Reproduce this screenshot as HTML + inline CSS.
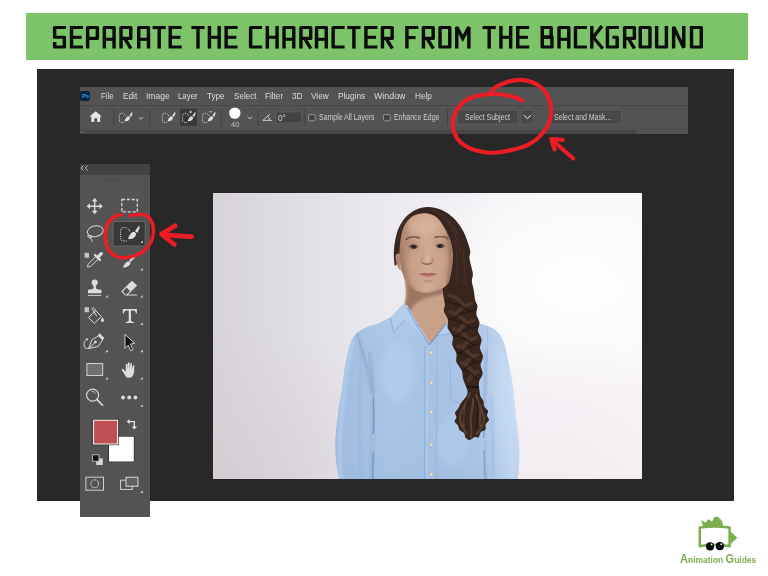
<!DOCTYPE html>
<html><head><meta charset="utf-8">
<style>
html,body{margin:0;padding:0;background:#fff;}
body{width:768px;height:576px;position:relative;overflow:hidden;font-family:"Liberation Sans",sans-serif;}
.abs{position:absolute;}
#banner{left:26px;top:13.2px;width:722px;height:47.2px;background:#7dc36a;}
.title{position:absolute;left:0;top:0;}
#dark{left:37px;top:69.4px;width:697px;height:431.2px;background:#282828;}
#menubar{left:80px;top:87px;width:608px;height:18px;background:#535353;}
#optbar{left:80px;top:105px;width:608px;height:24.5px;background:#535353;border-top:1px solid #474747;box-sizing:border-box;}
#strip{left:80px;top:129.5px;width:608px;height:4.5px;background:#535353;}
#strip i{position:absolute;left:0;top:0;height:100%;width:556px;background:#474747;display:block;}
.mt{position:absolute;top:90.8px;font-size:8.6px;line-height:10px;color:#dcdcdc;white-space:nowrap;transform-origin:0 50%;}
.ot{position:absolute;top:113.1px;font-size:8.2px;line-height:10px;color:#cdcdcd;white-space:nowrap;transform-origin:0 50%;}
.btn{position:absolute;top:109.5px;height:15px;background:#494949;border:1px solid #636363;border-radius:2px;box-sizing:border-box;}
#tools{left:80px;top:164px;width:70.3px;height:353px;background:#535353;}
#tools .hd{position:absolute;left:0;top:0;width:100%;height:11px;background:#424242;}
#photo{left:213px;top:193px;width:429px;height:286px;overflow:hidden;background:#e6e3e7;}
svg{display:block}
#ov{left:0;top:0;}
</style></head><body>
<div id="banner" class="abs"></div>
<svg class="title" width="768" height="70" viewBox="0 0 768 70"><g fill="none" stroke="#0c0c0c" stroke-width="3.45"><g transform="translate(52.9,26) scale(1,0.9)"><path d="M13.2,1.73 L1.73,1.73 L1.73,12.56 L11.47,12.56 L11.47,23.39 L1.73,23.39 L1.73,17.89" stroke-linejoin="round" stroke-linecap="butt"/></g><g transform="translate(69.8,26) scale(1,0.9)"><path d="M13.2,1.73 L1.73,1.73 L1.73,23.39 L13.2,23.39" stroke-linejoin="miter" stroke-linecap="butt"/><path d="M1.73,12.56 L11.9,12.56" stroke-linejoin="round" stroke-linecap="butt"/></g><g transform="translate(85.9,26) scale(1,0.9)"><path d="M1.73,25.11 L1.73,1.73 L11.47,1.73 L11.47,13.76 L1.73,13.76" stroke-linejoin="round" stroke-linecap="butt"/></g><g transform="translate(102.6,26) scale(1,0.9)"><path d="M1.73,25.11 L1.73,1.73 L11.47,1.73 L11.47,25.11" stroke-linejoin="round" stroke-linecap="butt"/><path d="M1.73,14.76 L11.47,14.76" stroke-linejoin="round" stroke-linecap="butt"/></g><g transform="translate(119.3,26) scale(1,0.9)"><path d="M1.73,25.11 L1.73,1.73 L11.47,1.73 L11.47,13.76 L1.73,13.76" stroke-linejoin="round" stroke-linecap="butt"/><path d="M5.4,13.76 L11.6,25.11" stroke-linejoin="round" stroke-linecap="butt"/></g><g transform="translate(137,26) scale(1,0.9)"><path d="M1.73,25.11 L1.73,1.73 L11.47,1.73 L11.47,25.11" stroke-linejoin="round" stroke-linecap="butt"/><path d="M1.73,14.76 L11.47,14.76" stroke-linejoin="round" stroke-linecap="butt"/></g><g transform="translate(152.6,26) scale(1,0.9)"><path d="M0,1.73 L13.2,1.73" stroke-linejoin="round" stroke-linecap="butt"/><path d="M6.6,1.73 L6.6,25.11" stroke-linejoin="round" stroke-linecap="butt"/></g><g transform="translate(168.5,26) scale(1,0.9)"><path d="M13.2,1.73 L1.73,1.73 L1.73,23.39 L13.2,23.39" stroke-linejoin="miter" stroke-linecap="butt"/><path d="M1.73,12.56 L11.9,12.56" stroke-linejoin="round" stroke-linecap="butt"/></g><g transform="translate(191.4,26) scale(1,0.9)"><path d="M0,1.73 L13.2,1.73" stroke-linejoin="round" stroke-linecap="butt"/><path d="M6.6,1.73 L6.6,25.11" stroke-linejoin="round" stroke-linecap="butt"/></g><g transform="translate(207.7,26) scale(1,0.9)"><path d="M1.73,0 L1.73,25.11" stroke-linejoin="round" stroke-linecap="butt"/><path d="M11.47,0 L11.47,25.11" stroke-linejoin="round" stroke-linecap="butt"/><path d="M1.73,12.56 L11.47,12.56" stroke-linejoin="round" stroke-linecap="butt"/></g><g transform="translate(224.4,26) scale(1,0.9)"><path d="M13.2,1.73 L1.73,1.73 L1.73,23.39 L13.2,23.39" stroke-linejoin="miter" stroke-linecap="butt"/><path d="M1.73,12.56 L11.9,12.56" stroke-linejoin="round" stroke-linecap="butt"/></g><g transform="translate(248.9,26) scale(1,0.9)"><path d="M13.2,1.73 L1.73,1.73 L1.73,23.39 L13.2,23.39" stroke-linejoin="round" stroke-linecap="butt"/></g><g transform="translate(265.6,26) scale(1,0.9)"><path d="M1.73,0 L1.73,25.11" stroke-linejoin="round" stroke-linecap="butt"/><path d="M11.47,0 L11.47,25.11" stroke-linejoin="round" stroke-linecap="butt"/><path d="M1.73,12.56 L11.47,12.56" stroke-linejoin="round" stroke-linecap="butt"/></g><g transform="translate(282.3,26) scale(1,0.9)"><path d="M1.73,25.11 L1.73,1.73 L11.47,1.73 L11.47,25.11" stroke-linejoin="round" stroke-linecap="butt"/><path d="M1.73,14.76 L11.47,14.76" stroke-linejoin="round" stroke-linecap="butt"/></g><g transform="translate(299.2,26) scale(1,0.9)"><path d="M1.73,25.11 L1.73,1.73 L11.47,1.73 L11.47,13.76 L1.73,13.76" stroke-linejoin="round" stroke-linecap="butt"/><path d="M5.4,13.76 L11.6,25.11" stroke-linejoin="round" stroke-linecap="butt"/></g><g transform="translate(314.8,26) scale(1,0.9)"><path d="M1.73,25.11 L1.73,1.73 L11.47,1.73 L11.47,25.11" stroke-linejoin="round" stroke-linecap="butt"/><path d="M1.73,14.76 L11.47,14.76" stroke-linejoin="round" stroke-linecap="butt"/></g><g transform="translate(331.4,26) scale(1,0.9)"><path d="M13.2,1.73 L1.73,1.73 L1.73,23.39 L13.2,23.39" stroke-linejoin="round" stroke-linecap="butt"/></g><g transform="translate(347.3,26) scale(1,0.9)"><path d="M0,1.73 L13.2,1.73" stroke-linejoin="round" stroke-linecap="butt"/><path d="M6.6,1.73 L6.6,25.11" stroke-linejoin="round" stroke-linecap="butt"/></g><g transform="translate(364.2,26) scale(1,0.9)"><path d="M13.2,1.73 L1.73,1.73 L1.73,23.39 L13.2,23.39" stroke-linejoin="miter" stroke-linecap="butt"/><path d="M1.73,12.56 L11.9,12.56" stroke-linejoin="round" stroke-linecap="butt"/></g><g transform="translate(380.7,26) scale(1,0.9)"><path d="M1.73,25.11 L1.73,1.73 L11.47,1.73 L11.47,13.76 L1.73,13.76" stroke-linejoin="round" stroke-linecap="butt"/><path d="M5.4,13.76 L11.6,25.11" stroke-linejoin="round" stroke-linecap="butt"/></g><g transform="translate(405.2,26) scale(1,0.9)"><path d="M13.2,1.73 L1.73,1.73 L1.73,25.11" stroke-linejoin="miter" stroke-linecap="butt"/><path d="M1.73,12.86 L10.4,12.86" stroke-linejoin="round" stroke-linecap="butt"/></g><g transform="translate(421.7,26) scale(1,0.9)"><path d="M1.73,25.11 L1.73,1.73 L11.47,1.73 L11.47,13.76 L1.73,13.76" stroke-linejoin="round" stroke-linecap="butt"/><path d="M5.4,13.76 L11.6,25.11" stroke-linejoin="round" stroke-linecap="butt"/></g><g transform="translate(438.3,26) scale(1,0.9)"><path d="M1.73,1.73 L11.47,1.73 L11.47,23.39 L1.73,23.39 Z" stroke-linejoin="round" stroke-linecap="butt"/></g><g transform="translate(455,26) scale(1,0.9)"><path d="M1.73,25.11 L1.73,1.12 L7.8,13.89 L13.88,1.12 L13.88,25.11" stroke-linejoin="miter" stroke-linecap="butt"/></g><g transform="translate(482.6,26) scale(1,0.9)"><path d="M0,1.73 L13.2,1.73" stroke-linejoin="round" stroke-linecap="butt"/><path d="M6.6,1.73 L6.6,25.11" stroke-linejoin="round" stroke-linecap="butt"/></g><g transform="translate(499.2,26) scale(1,0.9)"><path d="M1.73,0 L1.73,25.11" stroke-linejoin="round" stroke-linecap="butt"/><path d="M11.47,0 L11.47,25.11" stroke-linejoin="round" stroke-linecap="butt"/><path d="M1.73,12.56 L11.47,12.56" stroke-linejoin="round" stroke-linecap="butt"/></g><g transform="translate(516,26) scale(1,0.9)"><path d="M13.2,1.73 L1.73,1.73 L1.73,23.39 L13.2,23.39" stroke-linejoin="miter" stroke-linecap="butt"/><path d="M1.73,12.56 L11.9,12.56" stroke-linejoin="round" stroke-linecap="butt"/></g><g transform="translate(540.5,26) scale(1,0.9)"><path d="M1.73,1.73 L10.67,1.73 L10.67,12.36 L1.73,12.36" stroke-linejoin="round" stroke-linecap="butt"/><path d="M1.73,12.36 L11.47,12.36 L11.47,23.39 L1.73,23.39 L1.73,0.03" stroke-linejoin="round" stroke-linecap="butt"/></g><g transform="translate(557.3,26) scale(1,0.9)"><path d="M1.73,25.11 L1.73,1.73 L11.47,1.73 L11.47,25.11" stroke-linejoin="round" stroke-linecap="butt"/><path d="M1.73,14.76 L11.47,14.76" stroke-linejoin="round" stroke-linecap="butt"/></g><g transform="translate(573.75,26) scale(1,0.9)"><path d="M13.2,1.73 L1.73,1.73 L1.73,23.39 L13.2,23.39" stroke-linejoin="round" stroke-linecap="butt"/></g><g transform="translate(590.1,26) scale(1,0.9)"><path d="M1.73,0 L1.73,25.11" stroke-linejoin="round" stroke-linecap="butt"/><path d="M11.8,0 L3.23,12.56 L12.6,25.11" stroke-linejoin="miter" stroke-linecap="butt"/></g><g transform="translate(605.7,26) scale(1,0.9)"><path d="M13.2,1.73 L1.73,1.73 L1.73,23.39 L11.47,23.39 L11.47,12.56 L6.6,12.56" stroke-linejoin="round" stroke-linecap="butt"/></g><g transform="translate(622.9,26) scale(1,0.9)"><path d="M1.73,25.11 L1.73,1.73 L11.47,1.73 L11.47,13.76 L1.73,13.76" stroke-linejoin="round" stroke-linecap="butt"/><path d="M5.4,13.76 L11.6,25.11" stroke-linejoin="round" stroke-linecap="butt"/></g><g transform="translate(638.5,26) scale(1,0.9)"><path d="M1.73,1.73 L11.47,1.73 L11.47,23.39 L1.73,23.39 Z" stroke-linejoin="round" stroke-linecap="butt"/></g><g transform="translate(654.9,26) scale(1,0.9)"><path d="M1.73,0 L1.73,23.39 L11.47,23.39 L11.47,0" stroke-linejoin="round" stroke-linecap="butt"/></g><g transform="translate(671.9,26) scale(1,0.9)"><path d="M1.73,25.11 L1.73,0.93 L11.88,24.19 L11.88,0" stroke-linejoin="miter" stroke-linecap="butt"/></g><g transform="translate(689.8,26) scale(1,0.9)"><path d="M1.73,1.73 L11.47,1.73 L11.47,23.39 L1.73,23.39 L1.73,0.03" stroke-linejoin="round" stroke-linecap="butt"/></g></g></svg>
<div id="dark" class="abs"></div>
<div id="menubar" class="abs"></div>
<div id="optbar" class="abs"></div>
<div id="strip" class="abs"><i></i></div>
<div class="abs" style="left:80.3px;top:91px;width:9.4px;height:9.5px;background:#0a2440;border-radius:2px;"></div>
<span class="abs" style="left:81.5px;top:92.8px;font-size:6px;line-height:7px;font-weight:bold;color:#35a6f5;letter-spacing:-0.2px;transform:scaleX(0.99);transform-origin:0 50%;">Ps</span>
<svg class="abs" style="left:0;top:0" width="768" height="140" viewBox="0 0 768 140">
<defs>
<g id="qs">
<path d="M6.6,3.9 C5.6,1.7 4.2,1.3 2.6,1.3 C0.9,1.3 0.3,2.7 0.3,4.4 L0.3,8 C0.3,9.8 1.2,10.6 3,10.6 L4.8,10.6" fill="none" stroke="#cfcfcf" stroke-width="1" stroke-dasharray="1,0.8"/>
<path d="M13,-0.1 L13.4,1.5 L12,5.1 L10.2,3.7 Z" fill="#e0dee0"/>
<path d="M9.9,4.3 C8,4 6.4,6.2 5.4,9.1 C8.2,9.8 10.5,8.5 11.1,5.6 Z" fill="#e0dee0"/>
</g>
</defs>
<!-- home -->
<path d="M95.7,111.2 L101.9,116.6 L100.1,116.6 L100.1,122 L97.2,122 L97.2,118.3 L94.3,118.3 L94.3,122 L91.3,122 L91.3,116.6 L89.5,116.6 Z" fill="#e6e6e6"/>
<!-- dividers -->
<g stroke="#444" stroke-width="1">
<path d="M113.9,109 V125.2 M149.7,109 V125.2 M221.4,109 V125.4 M258.2,109 V125.4 M304.4,109 V125.4 M447.5,109 V125.4"/>
</g>
<use href="#qs" x="119.1" y="111.9"/>
<rect x="180.4" y="108.7" width="16.5" height="17" fill="#383838"/>
<use href="#qs" x="162.1" y="111.9"/>
<use href="#qs" x="182.2" y="111.9"/>
<use href="#qs" x="202.2" y="111.9"/>
<path d="M190.6,110.6 V113.4 M189.2,112 H192" stroke="#ddd" stroke-width="0.8" fill="none"/>
<path d="M209.2,111.8 H212" stroke="#ddd" stroke-width="0.8" fill="none"/>
<!-- chevrons -->
<path d="M138.6,117.2 L140.8,119.2 L143,117.2" stroke="#d0d0d0" stroke-width="0.9" fill="none"/>
<path d="M247.5,116.8 L249.8,118.8 L252.1,116.8" stroke="#d0d0d0" stroke-width="0.9" fill="none"/>
<!-- brush preview -->
<circle cx="234.8" cy="113.1" r="5.7" fill="#fff"/>
<!-- angle icon -->
<path d="M270,114 L262.8,120.4 H272 M267.6,116.2 Q269.6,117.8 269.6,120.4" stroke="#d4d4d4" stroke-width="0.9" fill="none"/>
<!-- angle input -->
<rect x="276.2" y="112" width="25" height="10.8" rx="1" fill="#434343" stroke="#606060" stroke-width="0.7"/>
<!-- checkboxes -->
<rect x="308.5" y="114.6" width="6.8" height="6.2" rx="1.3" fill="#463f44" stroke="#a5a5a5" stroke-width="0.8"/>
<rect x="383.5" y="114.6" width="6.8" height="6.2" rx="1.3" fill="#463f44" stroke="#a5a5a5" stroke-width="0.8"/>
<!-- buttons -->
<rect x="457" y="109.8" width="61" height="14.4" rx="1.5" fill="#484848" stroke="#626262" stroke-width="0.8"/>
<rect x="521.2" y="109.8" width="12.2" height="14.4" rx="1.5" fill="#484848" stroke="#626262" stroke-width="0.8"/>
<rect x="550.3" y="109.8" width="71" height="14.4" rx="1.5" fill="#484848" stroke="#626262" stroke-width="0.8"/>
<path d="M523.8,115.2 L527.3,118.6 L530.8,115.2" stroke="#eee" stroke-width="1" fill="none"/>
<!-- grip on strip -->
<path d="M80.6,133 L82,131 M82.6,133 L84,131" stroke="#888" stroke-width="0.7"/>
</svg>
<span class="abs" style="left:230.5px;top:119.6px;font-size:7.9px;line-height:9px;color:#c4c4c4;transform:scaleX(0.96);transform-origin:0 50%;">40</span>
<span class="abs" style="left:278.2px;top:112.9px;font-size:8.4px;line-height:10px;color:#d0d0d0;transform:scaleX(0.99);transform-origin:0 50%;">0°</span>
<span class="mt" style="left:101.0px;transform:scaleX(0.903)">File</span>
<span class="mt" style="left:122.7px;transform:scaleX(0.959)">Edit</span>
<span class="mt" style="left:145.6px;transform:scaleX(0.988)">Image</span>
<span class="mt" style="left:178.1px;transform:scaleX(0.912)">Layer</span>
<span class="mt" style="left:206.9px;transform:scaleX(0.945)">Type</span>
<span class="mt" style="left:233.5px;transform:scaleX(0.942)">Select</span>
<span class="mt" style="left:264.8px;transform:scaleX(0.948)">Filter</span>
<span class="mt" style="left:291.9px;transform:scaleX(0.947)">3D</span>
<span class="mt" style="left:311.2px;transform:scaleX(0.961)">View</span>
<span class="mt" style="left:338.0px;transform:scaleX(0.965)">Plugins</span>
<span class="mt" style="left:373.6px;transform:scaleX(1.028)">Window</span>
<span class="mt" style="left:414.6px;transform:scaleX(0.953)">Help</span>
<span class="ot" style="left:319.1px;transform:scaleX(0.848)">Sample All Layers</span>
<span class="ot" style="left:393.9px;transform:scaleX(0.844)">Enhance Edge</span>
<span class="ot" style="left:464.9px;transform:scaleX(0.859)">Select Subject</span>
<span class="ot" style="left:554.2px;transform:scaleX(0.850)">Select and Mask...</span>

<div id="tools" class="abs"><div class="hd"></div></div>
<div id="photo" class="abs">
<svg width="429" height="286" viewBox="213 193 429 286" style="position:absolute;left:0;top:0">
<defs>
<linearGradient id="bgh" x1="0" y1="0" x2="1" y2="0">
<stop offset="0" stop-color="#d7d3d8"/><stop offset="0.1" stop-color="#dcd9de"/><stop offset="0.28" stop-color="#e6e3e8"/><stop offset="0.48" stop-color="#eeecf0"/><stop offset="0.68" stop-color="#f5f3f7"/><stop offset="1" stop-color="#f8f6f9"/>
</linearGradient>
<radialGradient id="glow" cx="0.84" cy="0.32" r="0.42">
<stop offset="0" stop-color="#fff" stop-opacity="0.95"/><stop offset="0.5" stop-color="#fff" stop-opacity="0.55"/><stop offset="1" stop-color="#fff" stop-opacity="0"/>
</radialGradient>
<radialGradient id="dk" cx="0.0" cy="1.0" r="0.55">
<stop offset="0" stop-color="#d3cdd2" stop-opacity="0.8"/><stop offset="1" stop-color="#d3cdd2" stop-opacity="0"/>
</radialGradient>
<radialGradient id="pinkb" cx="0.8" cy="1.05" r="0.55">
<stop offset="0" stop-color="#f2e8ee" stop-opacity="0.75"/><stop offset="1" stop-color="#f2e8ee" stop-opacity="0"/>
</radialGradient>
<linearGradient id="skin" x1="0" y1="0" x2="1" y2="0">
<stop offset="0" stop-color="#a67d67"/><stop offset="0.22" stop-color="#c59b84"/><stop offset="0.5" stop-color="#d2ab94"/><stop offset="0.8" stop-color="#c9a089"/><stop offset="1" stop-color="#ae856f"/>
</linearGradient>
<linearGradient id="shirt" x1="0" y1="0" x2="1" y2="0">
<stop offset="0" stop-color="#9fbbde"/><stop offset="0.3" stop-color="#aac5e6"/><stop offset="0.6" stop-color="#a6c1e3"/><stop offset="0.8" stop-color="#b0c9e8"/><stop offset="0.91" stop-color="#c5d9f1"/><stop offset="1" stop-color="#d2e1f5"/>
</linearGradient>
<linearGradient id="shirtv" x1="0" y1="0" x2="0" y2="1">
<stop offset="0" stop-color="#b6d0ee" stop-opacity="0.5"/><stop offset="0.5" stop-color="#a8c4e6" stop-opacity="0"/><stop offset="1" stop-color="#98b6dd" stop-opacity="0.35"/>
</linearGradient>
<filter id="b1" x="-5%" y="-5%" width="110%" height="110%"><feGaussianBlur stdDeviation="0.55"/></filter>
<filter id="b2" x="-20%" y="-20%" width="140%" height="140%"><feGaussianBlur stdDeviation="1.4"/></filter>
<filter id="b3" x="-30%" y="-30%" width="160%" height="160%"><feGaussianBlur stdDeviation="3"/></filter>
<clipPath id="braidclip"><path d="M447,285 C446.4,286.5 443.6,291.1 443.4,294 C443.1,296.9 445.5,299.7 445.6,302.5 C445.6,305.3 443.4,308.2 443.8,311 C444.2,313.8 447.4,316.7 448,319.5 C448.7,322.3 446.9,325.2 447.7,328 C448.5,330.8 452,333.7 452.8,336.5 C453.5,339.3 451.7,342.2 452.3,345 C452.9,347.8 455.8,350.7 456.5,353.5 C457.2,356.3 455.5,359.2 456.4,362 C457.3,364.8 460.6,367.7 461.8,370.5 C462.9,373.3 462.2,375.6 463.1,379 C464.1,382.4 467,388 467.4,391 C467.8,394 466.9,395 465.8,397 C464.7,399 462.2,401.2 461,403 C459.8,404.8 459.5,406.3 458.5,408 C457.5,409.7 455.3,411.5 455,413 C454.7,414.5 456.6,415.6 456.5,417 C456.4,418.4 454.4,420.1 454.6,421.5 C454.9,422.9 457.2,424.1 458,425.5 C458.8,426.9 458.5,428.8 459.5,430 C460.5,431.2 463,431.7 464,433 C465,434.3 464.6,436.4 465.5,437.6 C466.4,438.8 468.1,440.1 469.6,440 C471.1,439.9 473,437.5 474.5,437 C476,436.5 477.5,438 478.6,437.2 C479.7,436.4 479.8,433.3 481,432 C482.2,430.7 484.8,430.8 485.6,429.5 C486.4,428.2 485,426.1 485.6,424.5 C486.2,422.9 488.8,421.5 489,420 C489.2,418.5 487.2,417 487,415.5 C486.8,414 488.5,412.5 488,411 C487.5,409.5 485,408.2 484.2,406.5 C483.4,404.8 484,402.7 483.4,401 C482.8,399.3 481.2,398.1 480.6,396.5 C480,394.9 479.9,393.9 479.6,391.5 C479.3,389.1 478.5,385 479,382 C479.5,379 482.5,376.3 482.7,373.5 C482.9,370.7 480.5,367.8 480.5,365 C480.6,362.2 483.1,359.3 483,356.5 C482.9,353.7 480.2,350.8 479.9,348 C479.7,345.2 481.9,342.3 481.6,339.5 C481.3,336.7 478.3,333.8 477.9,331 C477.6,328.2 479.8,325.3 479.5,322.5 C479.2,319.7 476.6,316.8 476.3,314 C475.9,311.2 477.9,308.3 477.4,305.5 C476.8,302.7 473.8,300.4 472.8,297 C471.8,293.6 471.7,287 471.5,285 Z"/></clipPath>
<clipPath id="faceclip"><path id="facep" d="M399.8,257.5 C399.2,252 399.6,246 400.4,240.8 C401,235.5 402,230.6 404,226.25 C406.2,221.8 409.3,218.2 413.3,215.8 C417.2,213.8 421.4,213 425.8,213.3 C429.7,213.7 433.3,214.9 436.25,216.9 C439.3,219.4 441.7,222.6 443.5,226.25 C446,230 448,234.2 449.8,238.75 C451.5,243.5 452.6,248.4 452.9,253.3 C453.1,258.2 452.8,263.1 451.9,267.9 C451.2,272.8 450.2,277.7 448.75,282.5 C446,286.5 442,289.5 436.25,290.8 C432.6,292.3 428.8,293 424.8,292.9 C421.1,292.6 417.6,291.5 414.4,289.8 C411.7,287.8 409.2,285.3 407.1,282.5 C405,279.3 403.3,275.8 401.9,272.1 C400.8,267.5 400.1,262.5 399.8,257.5 Z"/></clipPath>
<clipPath id="torsoclip"><path id="torsop" d="M403,304.5 L391,317.5 C386,319.5 381,322 377.2,323.9 C373,325 369,326.2 364.7,328 C361.5,329.5 358.6,331.4 356.4,333.6 C353.8,336 352,339 350.8,342 C349.6,345 348.7,348.3 348,351.7 C347,356 346,361 345.3,365.6 C344.4,370 343.7,375 343.2,379.4 C342.6,383 342.2,386.5 341.8,390 C341,396 340,400 339.2,404 C338,416 336,428 335.4,439 C335,448 335.5,455 336.2,462 C337,468 338,474 339.2,480 L517.9,480 C518.8,470 519.6,460 519.4,450 C519,439 517.6,428 516,417.5 C515.2,408 514.4,399 513.5,390 C513,385.5 512.2,381 511.4,376.7 C510.5,372 509.5,367.4 508.6,362.8 C507.8,358 506.9,353.5 505.8,348.9 C504.8,345 503.5,341.2 501.7,337.8 C500,334.5 497.6,331.6 494.7,329.4 C490,326.5 484.5,324.5 478,323.2 C470,321.2 460,320.8 452,322 L429,344.5 L407,305 Z"/></clipPath>
</defs>
<rect x="213" y="193" width="429" height="286" fill="url(#bgh)"/>
<rect x="213" y="193" width="429" height="286" fill="url(#glow)"/>
<rect x="213" y="193" width="429" height="286" fill="url(#dk)"/>
<rect x="213" y="193" width="429" height="286" fill="url(#pinkb)"/>
<g filter="url(#b1)">
<!-- neck -->
<path d="M403.5,276 C406.5,288 406.6,298 404,305.5 L429,345.5 L453,322 C448,312 446.5,300 447,288 Z" fill="#c9a189"/>
<path d="M406.5,282 C407.5,292 407,299 405,305.5 L410,312 C414,300 428,297 447,293 L448,284 Z" fill="#94705d" opacity="0.85" filter="url(#b2)"/>
<!-- shirt -->
<use href="#torsop" fill="url(#shirt)"/>
<g clip-path="url(#torsoclip)">
<rect x="330" y="300" width="200" height="180" fill="url(#shirtv)"/>
<!-- arm/torso separations -->
<path d="M369,352 C371,366 372.5,378 373,390 C373.8,405 373.6,425 372.8,445 L371.8,480" fill="none" stroke="#86a5cf" stroke-width="2.4" opacity="0.8" filter="url(#b2)"/>
<path d="M373.4,398 C374,420 373.6,445 372.6,480" fill="none" stroke="#6e8db8" stroke-width="1.1" opacity="0.8"/>
<path d="M373.3,434 L373,453" fill="none" stroke="#eceaf0" stroke-width="1" opacity="0.7"/>
<path d="M486.5,350 C485.5,375 484.2,398 483.8,418 C483.4,438 484,458 485.4,480" fill="none" stroke="#86a5cf" stroke-width="2.4" opacity="0.7" filter="url(#b2)"/>
<path d="M483.8,412 C483.3,435 484,458 485.4,480" fill="none" stroke="#7493be" stroke-width="1" opacity="0.75"/><path d="M483.7,438 L484,450" fill="none" stroke="#f0eef3" stroke-width="1" opacity="0.7"/>
<!-- left arm shading -->
<path d="M352,340 C347,360 344,390 341,420 C339,445 339,465 341,480" fill="none" stroke="#bcd4f0" stroke-width="5" opacity="0.55" filter="url(#b2)"/>
<path d="M362,345 C360,380 358,420 360,480" fill="none" stroke="#95b3db" stroke-width="4" opacity="0.4" filter="url(#b2)"/>
<path d="M498,345 C503,375 509,410 512,445 L512,480" fill="none" stroke="#c2d8f1" stroke-width="6" opacity="0.6" filter="url(#b2)"/>
<path d="M490,395 C493,425 494,455 493,480" fill="none" stroke="#95b3db" stroke-width="4" opacity="0.4" filter="url(#b2)"/>
<!-- chest light -->
<ellipse cx="398" cy="372" rx="18" ry="30" fill="#b9d2ef" opacity="0.5" filter="url(#b3)"/>
<ellipse cx="452" cy="440" rx="16" ry="28" fill="#b5cfed" opacity="0.45" filter="url(#b3)"/>
<!-- placket -->
<path d="M425,346 L424.6,480" stroke="#8eadd6" stroke-width="1" opacity="0.9" fill="none"/>
<path d="M436.6,338 L436.4,480" stroke="#92b0d8" stroke-width="0.9" opacity="0.8" fill="none"/>
<path d="M427,348 L426.8,480" stroke="#bcd3ef" stroke-width="1.2" opacity="0.7" fill="none"/>
<!-- pocket -->
<path d="M450.4,366 L450.6,399 L462,405" stroke="#8fadd6" stroke-width="0.9" opacity="0.8" fill="none"/>
<!-- buttons -->
<g fill="#e6dece" stroke="#a9a495" stroke-width="0.5">
<circle cx="431" cy="352.6" r="1.9"/><circle cx="431.2" cy="382.5" r="1.9"/><circle cx="431.2" cy="412" r="1.9"/><circle cx="431.3" cy="444.6" r="1.9"/><circle cx="431.3" cy="474.4" r="1.9"/>
</g>
<!-- sleeve seam left shoulder -->
<path d="M357,333.5 C360,345 364,356 367,368 C369,378 371,386 372,392" stroke="#86a3cb" stroke-width="2.2" opacity="0.7" fill="none" filter="url(#b2)"/><path d="M357.4,333.5 C360,345 364,356 366.6,368" stroke="#8aa8d0" stroke-width="0.9" opacity="0.8" fill="none"/>
<path d="M487,327 C488,338 488,350 487,362" stroke="#98b5dc" stroke-width="0.9" opacity="0.6" fill="none"/>
</g>
<!-- collar left flap -->
<path d="M403,304.6 C398,309 394,313.5 390.8,317.8 L393.4,332.6 L404.9,319.6 L416,329 L429,345 L430,343 C423,332 414,318 407.4,306 Z" fill="#b3cdec"/>
<path d="M390.8,317.8 L393.4,332.6 L404.9,319.6" fill="none" stroke="#87a6d0" stroke-width="0.9" opacity="0.9"/>
<path d="M407.4,308 C413,319 421,332 429,344.6" fill="none" stroke="#7f9dc6" stroke-width="1.1" opacity="0.9"/>
<!-- collar right flap -->
<path d="M429,344.6 L446.4,323 L454,321.5 L451,333.6 L437,335.8 Z" fill="#b5cfed"/>
<path d="M437,335.8 L451,333.6" fill="none" stroke="#87a6d0" stroke-width="0.9" opacity="0.9"/>
<path d="M429.4,344.6 L446.4,323" fill="none" stroke="#6f87ab" stroke-width="1.1" opacity="0.9"/>
<!-- hair outer -->
<path d="M394.8,266 C393.6,258 393.6,252 394.2,247 C394.8,241 396,235.5 397.7,230.4 C399.6,225.6 402,221.5 405,217.9 C408,214.6 411.5,212 415.4,210 C419.3,208.2 423.5,207.2 427.9,207.1 C432.3,207.1 436.5,208 440.4,209.6 C444.3,211.2 447.8,213.2 450.8,215.8 C454.5,218.8 457.6,222.3 460.2,226.25 C462.9,230.2 465,234.3 466.5,238.75 C468,243 469.4,247 470.2,250.6 C470.6,253 469.4,255.4 469.4,257.6 C469.6,260.6 470.6,263.4 471.2,266.2 C471.8,269 473,272 472.9,274.8 C472.8,277.2 471.6,279.4 471.9,281.8 C472.2,284.8 473.4,287.4 473.8,290.4 C474.4,294 474.6,298 475.4,301 L476.9,306.7 L445,306 L440,270 L400,262 Z" fill="#372520"/>
<!-- face -->
<use href="#facep" fill="url(#skin)"/>
<g clip-path="url(#faceclip)">
<ellipse cx="424" cy="226" rx="15" ry="9" fill="#d8b39c" opacity="0.8" filter="url(#b3)"/>
<ellipse cx="415" cy="263" rx="7" ry="8" fill="#cfa58d" opacity="0.6" filter="url(#b3)"/>
<ellipse cx="441" cy="263" rx="7" ry="8" fill="#cfa58d" opacity="0.6" filter="url(#b3)"/>
<path d="M447,230 C452,245 453,265 447,286" fill="none" stroke="#8c6555" stroke-width="4" opacity="0.55" filter="url(#b2)"/>
<path d="M400,250 C401,268 406,282 414,290" fill="none" stroke="#96705f" stroke-width="3.5" opacity="0.5" filter="url(#b2)"/>
<path d="M410,290 C418,296 432,296 444,288" fill="none" stroke="#a47e6b" stroke-width="3" opacity="0.5" filter="url(#b2)"/>
<!-- eye sockets -->
<ellipse cx="413.3" cy="245.6" rx="6" ry="3.6" fill="#a88270" opacity="0.55" filter="url(#b2)"/>
<ellipse cx="440.4" cy="245" rx="6" ry="3.6" fill="#a88270" opacity="0.55" filter="url(#b2)"/>
<!-- brows -->
<path d="M405.6,239.8 C409,236.6 414.5,236.2 420,238" fill="none" stroke="#6a4a3b" stroke-width="1.8" opacity="0.8" filter="url(#b1)"/>
<path d="M434.4,237.6 C439.5,235.6 444.4,236 448.4,239" fill="none" stroke="#6a4a3b" stroke-width="1.8" opacity="0.8" filter="url(#b1)"/>
<!-- eyes -->
<ellipse cx="413.3" cy="246.9" rx="3.8" ry="1.9" fill="#7d6052"/>
<ellipse cx="440.4" cy="246.2" rx="3.8" ry="1.9" fill="#7d6052"/>
<ellipse cx="413.8" cy="246.8" rx="2.3" ry="1.9" fill="#2e201b"/>
<ellipse cx="440" cy="246.1" rx="2.3" ry="1.9" fill="#2e201b"/>
<path d="M409.2,246.8 C411.5,244.4 415.5,244.4 417.6,247" fill="none" stroke="#3a2a24" stroke-width="1"/>
<path d="M436.2,246.2 C438.5,243.8 442.5,243.8 444.6,246.4" fill="none" stroke="#3a2a24" stroke-width="1"/>
<!-- nose -->
<path d="M424.2,247 C423.4,253 422.6,258 422.4,261.6" fill="none" stroke="#b08872" stroke-width="1.6" opacity="0.35" filter="url(#b2)"/>
<path d="M422,262.4 C423.4,264.6 425.4,263.6 427,264.4 C428.8,263.6 430.6,264.6 432,262.4" fill="none" stroke="#8a614e" stroke-width="1.4" opacity="0.85" filter="url(#b1)"/><path d="M421.6,258 C420.6,260 420.8,262 422.2,263 M432.6,258 C433.4,260 433.2,262 431.8,263" fill="none" stroke="#a57a64" stroke-width="1" opacity="0.7" filter="url(#b1)"/>
<ellipse cx="427.6" cy="258.6" rx="2.2" ry="3" fill="#dcb8a2" opacity="0.7" filter="url(#b1)"/>
<!-- mouth -->
<path d="M419.8,274 C423,272.4 425.5,272.6 427.8,273.2 C430,272.6 433,272.4 436.2,274 C433,276.8 423,276.8 419.8,274 Z" fill="#b3746d"/>
<path d="M421.2,275.2 C424,278 432,278 434.8,275.2 C432,276 424,276 421.2,275.2 Z" fill="#c4837e"/>
<path d="M419.8,274 C424,274.6 432,274.6 436.2,274" fill="none" stroke="#8b574f" stroke-width="0.7"/>
<ellipse cx="428" cy="281" rx="5" ry="1.6" fill="#a9826f" opacity="0.5" filter="url(#b1)"/>
</g>
<!-- ear -->
<path d="M400.2,254 C397.5,252.5 395.4,254 395.6,257.5 C395.8,262.5 397.5,268 400.8,270.8 Z" fill="#b58b77"/>
<path d="M399.6,257 C397.6,257 397.2,260 398.6,264" fill="none" stroke="#8d6656" stroke-width="0.8" opacity="0.8"/>
<!-- hair highlights on head -->
<g fill="none" stroke="#54392f" stroke-width="1.6" opacity="0.55" filter="url(#b1)">
<path d="M432,210 C442,213 452,222 458,234"/>
<path d="M440,214 C450,222 457,236 460,252"/>
<path d="M455,240 C458,255 458,270 456,284"/>
<path d="M463,250 C465,265 466,280 466,296"/>
<path d="M398,240 C399,230 403,221 410,215"/>
</g>
<!-- braid -->
<path d="M447,285 C446.4,286.5 443.6,291.1 443.4,294 C443.1,296.9 445.5,299.7 445.6,302.5 C445.6,305.3 443.4,308.2 443.8,311 C444.2,313.8 447.4,316.7 448,319.5 C448.7,322.3 446.9,325.2 447.7,328 C448.5,330.8 452,333.7 452.8,336.5 C453.5,339.3 451.7,342.2 452.3,345 C452.9,347.8 455.8,350.7 456.5,353.5 C457.2,356.3 455.5,359.2 456.4,362 C457.3,364.8 460.6,367.7 461.8,370.5 C462.9,373.3 462.2,375.6 463.1,379 C464.1,382.4 467,388 467.4,391 C467.8,394 466.9,395 465.8,397 C464.7,399 462.2,401.2 461,403 C459.8,404.8 459.5,406.3 458.5,408 C457.5,409.7 455.3,411.5 455,413 C454.7,414.5 456.6,415.6 456.5,417 C456.4,418.4 454.4,420.1 454.6,421.5 C454.9,422.9 457.2,424.1 458,425.5 C458.8,426.9 458.5,428.8 459.5,430 C460.5,431.2 463,431.7 464,433 C465,434.3 464.6,436.4 465.5,437.6 C466.4,438.8 468.1,440.1 469.6,440 C471.1,439.9 473,437.5 474.5,437 C476,436.5 477.5,438 478.6,437.2 C479.7,436.4 479.8,433.3 481,432 C482.2,430.7 484.8,430.8 485.6,429.5 C486.4,428.2 485,426.1 485.6,424.5 C486.2,422.9 488.8,421.5 489,420 C489.2,418.5 487.2,417 487,415.5 C486.8,414 488.5,412.5 488,411 C487.5,409.5 485,408.2 484.2,406.5 C483.4,404.8 484,402.7 483.4,401 C482.8,399.3 481.2,398.1 480.6,396.5 C480,394.9 479.9,393.9 479.6,391.5 C479.3,389.1 478.5,385 479,382 C479.5,379 482.5,376.3 482.7,373.5 C482.9,370.7 480.5,367.8 480.5,365 C480.6,362.2 483.1,359.3 483,356.5 C482.9,353.7 480.2,350.8 479.9,348 C479.7,345.2 481.9,342.3 481.6,339.5 C481.3,336.7 478.3,333.8 477.9,331 C477.6,328.2 479.8,325.3 479.5,322.5 C479.2,319.7 476.6,316.8 476.3,314 C475.9,311.2 477.9,308.3 477.4,305.5 C476.8,302.7 473.8,300.4 472.8,297 C471.8,293.6 471.7,287 471.5,285 Z" fill="#38261f"/>
<g clip-path="url(#braidclip)">
<g fill="none" stroke="#5e4236" stroke-width="3.6" opacity="0.6" stroke-linecap="round" filter="url(#b1)"><path d="M449.2,295 Q458.5,298 462.8,304"/><path d="M471.2,303.5 Q461.6,306.5 457.1,312.5"/><path d="M450.1,312 Q460.1,315 465.1,321"/><path d="M473.3,320.5 Q463.9,323.5 459.4,329.5"/><path d="M453.7,329 Q463.2,332 467.6,338"/><path d="M475.9,337.5 Q467,340.5 463.1,346.5"/><path d="M457.9,346 Q466.7,349 470.6,355"/><path d="M477.6,354.5 Q469.2,357.5 465.9,363.5"/><path d="M461.4,363 Q469.5,366 472.5,372"/><path d="M478.1,371.5 Q471,374.5 468.9,380.5"/></g>
<g fill="none" stroke="#20130f" stroke-width="1.6" opacity="0.65" stroke-linecap="round" filter="url(#b1)"><path d="M445.6,301.5 Q460.2,303.5 469.6,311.5"/><path d="M476.3,310 Q461.3,312 451.7,320"/><path d="M448,318.5 Q462.5,320.5 471.8,328.5"/><path d="M477.9,327 Q464.1,329 455.2,337"/><path d="M452.8,335.5 Q465.9,337.5 474.4,345.5"/><path d="M479.9,344 Q467.4,346 459.2,354"/><path d="M456.5,352.5 Q468.5,354.5 476.3,362.5"/><path d="M480.5,361 Q469.7,363 462.6,371"/><path d="M461.8,369.5 Q471,371.5 477.1,379.5"/></g>
<g fill="none" stroke="#6b4c3e" stroke-width="2" opacity="0.75" filter="url(#b1)">
<path d="M470,392 C468,402 462,408 460,416 C459,422 463,428 467,434"/>
<path d="M476,394 C478,404 483,410 484,418 C484,425 480,430 476,435"/>
<path d="M473,398 C474,408 469,416 471,424 C472,430 471,434 471,438"/>
<path d="M466,404 C463,412 466,420 463,428"/>
<path d="M480,404 C482,412 478,420 481,428"/>
</g>
<g fill="none" stroke="#24160f" stroke-width="1.2" opacity="0.7" filter="url(#b1)">
<path d="M468,398 C466,408 464,414 465,424"/>
<path d="M477,400 C479,410 476,420 477,430"/>
</g>
<path d="M466.6,386.4 L479.6,387.6" stroke="#1a1210" stroke-width="2" />
</g>
</g>
</svg>
</div>
<svg class="abs" style="left:0;top:0" width="768" height="576" viewBox="0 0 768 576">
<defs>
<path id="tri" d="M0,2.6 L2.6,2.6 L2.6,0 Z" fill="#d0d0d0"/>
</defs>
<!-- header << -->
<path d="M83.4,165.6 L81,168 L83.4,170.4 M87.6,165.6 L85.2,168 L87.6,170.4" stroke="#d0d0d0" stroke-width="0.9" fill="none"/>
<!-- grip -->
<path d="M102,180 H122" stroke="#474747" stroke-width="2.4" stroke-dasharray="1,1"/>
<!-- move -->
<g fill="#dcdcdc" stroke="none">
<path d="M94.7,198.1 L97.6,201.6 L95.4,201.6 L95.4,205.5 L99.4,205.5 L99.4,203.3 L102.9,206.2 L99.4,209.1 L99.4,206.9 L95.4,206.9 L95.4,210.8 L97.6,210.8 L94.7,214.3 L91.8,210.8 L94,210.8 L94,206.9 L90,206.9 L90,209.1 L86.5,206.2 L90,203.3 L90,205.5 L94,205.5 L94,201.6 L91.8,201.6 Z"/>
</g>
<!-- marquee -->
<rect x="121.8" y="199.5" width="15.5" height="12.4" fill="none" stroke="#d6d6d6" stroke-width="1.3" stroke-dasharray="3.2,1.7"/>
<!-- lasso -->
<g fill="none" stroke="#d4d4d4" stroke-width="1">
<ellipse cx="95.3" cy="231.3" rx="8" ry="5.4" transform="rotate(-12 95.3 231.3)"/>
<path d="M88.5,234.5 C87,236.5 88.5,238.5 91,237.8 C93,237 92,235 90,235.5 C88,236.3 90,238.5 92,239.5 C92.5,240.3 92,241.5 91,242.2"/>
</g>
<path transform="translate(106.3,238.8)" d="M0,2.2 L1.6,2.2 L1.6,0.6 Z" fill="#aaa"/>
<!-- selected tool -->
<rect x="113.2" y="221.5" width="32" height="24.5" rx="1.5" fill="#383838" stroke="#6a6a6a" stroke-width="0.9"/>
<g transform="translate(120.2,225.6) scale(1.45)">
<path d="M6.6,3.9 C5.6,1.7 4.2,1.3 2.6,1.3 C0.9,1.3 0.3,2.7 0.3,4.4 L0.3,8 C0.3,9.8 1.2,10.6 3,10.6 L4.8,10.6" fill="none" stroke="#c8c8c8" stroke-width="0.75" stroke-dasharray="0.8,0.7"/>
<path d="M13,-0.1 L13.4,1.5 L12,5.1 L10.2,3.7 Z" fill="#e2e0e2"/>
<path d="M9.9,4.3 C8,4 6.4,6.2 5.4,9.1 C8.2,9.8 10.5,8.5 11.1,5.6 Z" fill="#e2e0e2"/>
</g>
<use href="#tri" x="140.2" y="240.4"/>
<!-- eyedropper -->
<g>
<path d="M87.4,267 L88.2,264.2 L96.2,256.2 L98.6,258.6 L90.6,266.6 Z" fill="none" stroke="#dcdcdc" stroke-width="1"/>
<path d="M95,255 L100,260" stroke="#dcdcdc" stroke-width="2.2" stroke-linecap="round"/>
<path d="M98,257 L101.3,253.7" stroke="#dcdcdc" stroke-width="3.2" stroke-linecap="round"/>
<path d="M84.6,253 L86.3,252.4 L87.8,253.2 L89,252.6 L89,257.6 L87.6,258 L86.2,257.4 L84.6,258 Z" fill="#c4c4c4"/>
</g>
<!-- brush -->
<path d="M135.5,254.5 L136.2,256.2 L130.6,262 L129,260.6 Z" fill="#dcdadc"/>
<path d="M129.2,261.4 C127,260.6 124.5,263.5 122.8,267.6 C126.5,267.8 130,266 130.6,262.6 Z" fill="#dcdadc"/>
<use href="#tri" x="140.2" y="267.9"/>
<!-- stamp -->
<g fill="#dcdadc">
<circle cx="94.7" cy="282.6" r="3.1"/>
<path d="M93.2,284.5 L93.6,287.4 C93.6,288.9 91,289.5 88.6,289.8 Q87.9,289.9 87.9,290.7 V293.3 H101.5 V290.7 Q101.5,289.9 100.8,289.8 C98.4,289.5 95.8,288.9 95.8,287.4 L96.2,284.5 Z"/>
<rect x="88" y="294.9" width="13.4" height="0.9" />
</g>
<use href="#tri" x="105.3" y="294.9"/>
<!-- eraser -->
<path d="M131.9,280.8 L137.2,285.6 L127.2,295.3 H125 L121.8,292 Q121.2,291.2 121.9,290.4 Z" fill="#dcdadc"/>
<path d="M122.9,291.2 L126.6,287.6 L130,291 L126.6,294.4 H125.4 Z" fill="#535353"/>
<path d="M126,295 H137.2" stroke="#dcdadc" stroke-width="1"/>
<use href="#tri" x="140.2" y="294.9"/>
<!-- bucket -->
<g fill="none" stroke="#dcdcdc" stroke-width="1">
<path d="M88.6,317.6 L95.6,310.6 L101.4,316.4 L94.4,323.4 Z"/>
<path d="M96.8,316.2 L92.6,309.6 Q91.6,308.4 92.8,307.8 Q93.8,307.6 94.4,308.6 L96,311.4"/>
</g>
<path d="M102.4,317.2 Q104.2,319.4 104,320.8 Q103.6,322.2 102.4,322.2 Q101,322 101,320.6 Q101,319.2 102.4,317.2 Z" fill="#dcdcdc"/>
<path d="M84.6,307.4 L86.3,306.8 L87.8,307.6 L89,307 L89,312 L87.6,312.4 L86.2,311.8 L84.6,312.4 Z" fill="#c4c4c4"/>
<!-- T -->
<path d="M122.8,308.9 H136.9 V313.4 H135.9 C135.7,311.5 135,310.5 133,310.5 H131 V320.3 C131,321.5 131.8,321.8 134,321.9 V322.9 H125.7 V321.9 C127.9,321.8 128.7,321.5 128.7,320.3 V310.5 H126.7 C124.7,310.5 124,311.5 123.8,313.4 H122.8 Z" fill="#dcdcdc"/>
<use href="#tri" x="140.2" y="322.4"/>
<!-- pen -->
<g fill="none" stroke="#dcdcdc" stroke-width="1">
<path d="M88.6,348.6 L92,339.6 L98.6,335.8 L102.6,340 L98.2,346.4 Z"/>
<path d="M89,348.4 L95,342.4"/>
<circle cx="95.4" cy="342" r="1" fill="#dcdcdc"/>
<path d="M86.8,339.4 C84,341 83.4,344.4 84.6,347 C85.4,348.4 86.8,348.6 88.2,348.4"/>
</g>
<path d="M97.6,335.2 L99.6,333.2 L104.4,338 L102.6,340 Z" fill="#dcdcdc"/>
<circle cx="86.9" cy="339.3" r="1.1" fill="#dcdcdc"/>
<use href="#tri" x="105.3" y="349.6"/>
<!-- path selection arrow -->
<path d="M125,334.4 L134.8,343.4 L130.4,344 L132.8,349.8 L130.8,350.8 L128.2,345.2 L125,348.4 Z" fill="#161213" stroke="#dcdcdc" stroke-width="0.9" stroke-linejoin="miter"/>
<use href="#tri" x="140.2" y="349.6"/>
<!-- rectangle -->
<rect x="86.9" y="363.5" width="15.8" height="12" fill="#707070" stroke="#d0d0d0" stroke-width="1"/>
<use href="#tri" x="105.3" y="377"/>
<!-- hand -->
<path d="M126.6,377.4 C125,375.4 123.6,372.6 121.8,370.2 C121.2,369.2 122.6,368.4 123.6,369.4 L125.8,371.8 L125.8,364.6 C125.8,363.4 127.4,363.4 127.5,364.6 L127.6,369 L127.9,363.2 C128,362 129.7,362 129.7,363.2 L129.8,369 L130.4,363.8 C130.5,362.6 132.1,362.8 132,364 L131.8,369.4 L132.8,365.8 C133.1,364.8 134.6,365.1 134.4,366.2 C134,369 134.6,373 133,375.6 C132.4,376.8 131.4,377.8 130,377.8 Z" fill="#dcdadc"/>
<use href="#tri" x="140.2" y="377"/>
<!-- zoom -->
<circle cx="92.6" cy="395.1" r="6" fill="none" stroke="#dcdcdc" stroke-width="1.1"/>
<path d="M91.4,391.4 Q94.6,390.8 95.6,393.8" fill="none" stroke="#c8c8c8" stroke-width="0.8"/>
<path d="M97,399.6 L102.6,405.2" stroke="#dcdcdc" stroke-width="1.6" stroke-linecap="round"/>
<!-- dots -->
<g fill="#dcdcdc"><circle cx="123" cy="397.5" r="1.9"/><circle cx="129.2" cy="397.5" r="1.9"/><circle cx="135.4" cy="397.5" r="1.9"/></g>
<use href="#tri" x="140.2" y="404.4"/>
<!-- swatches -->
<rect x="108.3" y="436" width="26.2" height="26.2" fill="#2e2e2e"/>
<rect x="109" y="436.7" width="24.8" height="24.8" fill="#fff"/>
<rect x="92.4" y="419" width="26.4" height="26.2" fill="#2e2e2e"/>
<rect x="93.1" y="419.7" width="25" height="24.8" fill="#fff"/>
<rect x="94.1" y="420.7" width="23" height="22.8" fill="#c04e55"/>
<!-- swap -->
<path d="M126.8,421.6 L129.6,419 L129.6,420.9 L135,420.9 L135,426.4 L137,426.4 L134.3,429.4 L131.6,426.4 L133.6,426.4 L133.6,422.3 L129.6,422.3 L129.6,424.2 Z" fill="#e4e4e4"/>
<!-- default colors -->
<rect x="96.2" y="458.4" width="6.6" height="6.6" fill="#d8d4d6"/>
<rect x="92.6" y="454.8" width="6.4" height="6.4" fill="#111" stroke="#d0d0d0" stroke-width="0.8"/>
<!-- quick mask -->
<rect x="85.9" y="477.2" width="17.6" height="13" fill="none" stroke="#cfcfcf" stroke-width="1"/>
<circle cx="94.7" cy="483.7" r="3.9" fill="none" stroke="#f0f0f0" stroke-width="1.1" stroke-dasharray="1,1.05"/>
<!-- screen mode -->
<rect x="120.6" y="480.2" width="11.8" height="9.2" fill="#535353" stroke="#d0d0d0" stroke-width="1"/>
<rect x="126" y="477.3" width="11.9" height="9" fill="#606060" stroke="#d0d0d0" stroke-width="1.1"/>
<use href="#tri" x="140.2" y="490.4" transform="translate(0,0)"/>
</svg>

<svg id="ov" class="abs" width="768" height="576" viewBox="0 0 768 576">
<g fill="none" stroke="#ec1c24" stroke-linecap="round" stroke-linejoin="round">
<!-- circle around Select Subject -->
<path stroke-width="4.1" d="M522.4,100.7 C517,97.5 513,96.3 508.1,95.5 C503,94.6 498,93.9 492.5,94 C487,94.1 481.5,94.8 476.9,96 C471.5,97.4 467.2,99.2 463.9,101.8 C460,104.8 457.5,108 456,111.7 C454.4,115 453,118.5 452.9,122.1 C452.8,126 453.2,130 454.7,133.8 C456.3,137.8 459,141.5 462.6,144.2 C466.3,147 470.8,149 475.6,150.2 C481,151.6 486.8,152.8 492.5,152.8 C498.7,152.8 504.8,151.8 510.7,150.2 C517.2,148.8 523.5,147.3 529,144.2 C534.5,141.2 538.8,138 542,133.8 C545,130 548,126.3 549.3,122.1 C550.7,117.8 551.6,113.5 551.1,109.1 C550.8,104.8 550.2,101 548.5,97.3 C547,93.8 544.8,90.8 542,88.2 C539.3,85.8 536.4,83.8 532.9,82.5 C529.2,81 525.2,80 521.1,79.9 C516.7,79.8 512.3,80.5 508.1,81.7 C504.4,82.8 500.8,84.2 497.7,86.1 C495.2,87.6 493,89.4 491.2,91.4"/>
<!-- arrow 1 -->
<path stroke-width="4.2" d="M573.2,158.5 L552.5,140.2"/>
<path stroke-width="4.2" d="M562.8,139.8 L551.3,139 L554.5,149.4"/>
<!-- circle around tool -->
<path stroke-width="3.5" d="M121.25,214.8 C118.3,215.1 115.6,215.8 113.4,217.2 C111,218.8 109.3,220.9 108,223.4 C106.7,225.8 105.8,228.4 105.6,231.25 C105.3,234.3 105.2,237.5 105.6,240.6 C106.1,244 107.1,247.2 108.75,250 C110.4,252.8 112.8,254.9 115.8,256.25 C118.5,257.4 121.4,257.9 124.4,257.8 C128.1,257.7 131.8,256.9 135.3,255.5 C138.8,254.2 142.1,252.5 144.7,250 C147.2,247.7 149.4,245.2 150.9,242.2 C152.3,239.3 153.2,236.1 153.3,232.8 C153.5,229.6 153.4,226.4 152.5,223.4 C151.6,220.6 150.1,218.2 147.8,216.4 C145.6,214.8 142.9,214.3 140,214.4 C136.5,214.5 133,214.9 129.8,215.6"/>
<!-- arrow 2 -->
<path stroke-width="4.7" d="M191.6,236.7 C182,236.4 172,235.4 162.7,234.4"/>
<path stroke-width="4.7" d="M175.2,225.8 L161.4,234.1 L174.4,244.5"/>
</g>
</svg>

<svg class="abs" style="left:0;top:0" width="768" height="576" viewBox="0 0 768 576">
<g fill="#7aae4c">
<path d="M701,520.2 L705.8,522.4 L708.2,519 L712,521.8 L714.5,516.9 C716.5,516.6 718,517 718.9,517.8 C720.6,519 721.6,520.6 722.2,522 L723.4,527 L703.4,527 Z"/>
<path d="M730.6,531.6 L737.3,537.7 L730.6,544 Z"/>
</g>
<path d="M699.8,527.4 Q715,525.6 729.6,527.4 L729.6,546.2 Q715,543.4 699.8,546.2 Z" fill="#fff" stroke="#7aae4c" stroke-width="2.5" stroke-linejoin="round"/>
<circle cx="710.1" cy="546.4" r="4.1" fill="#070707"/>
<circle cx="719.9" cy="546.2" r="4.1" fill="#070707"/>
<circle cx="711.6" cy="544.4" r="0.9" fill="#fff"/>
<circle cx="721.4" cy="544.2" r="0.9" fill="#fff"/>
</svg>
<span class="abs" id="logotxt" style="left:679.8px;top:551.6px;font-size:9.4px;line-height:15px;color:#7aae4c;white-space:nowrap;transform-origin:0 50%;font-weight:bold;transform:scaleX(0.903);"><span style="font-size:12.2px">A</span>nimation <span style="font-size:12.2px">G</span>uides</span>

</body></html>
